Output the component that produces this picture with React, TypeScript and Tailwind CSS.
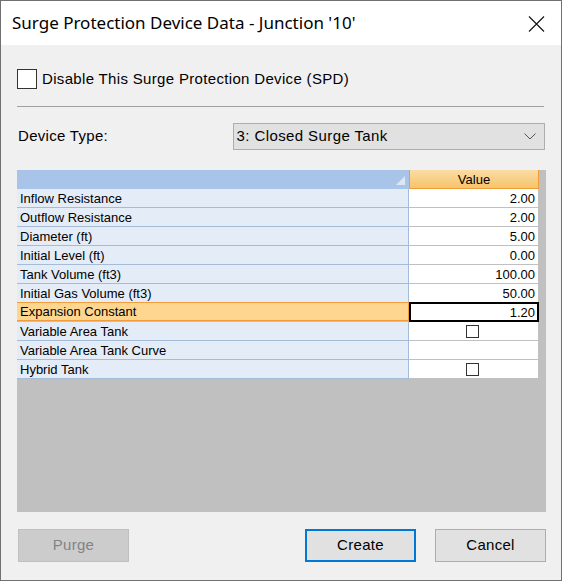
type Row = {
  label: string
  value?: string
  check?: boolean
  selected?: boolean
}

const rows: Row[] = [
  { label: 'Inflow Resistance', value: '2.00' },
  { label: 'Outflow Resistance', value: '2.00' },
  { label: 'Diameter (ft)', value: '5.00' },
  { label: 'Initial Level (ft)', value: '0.00' },
  { label: 'Tank Volume (ft3)', value: '100.00' },
  { label: 'Initial Gas Volume (ft3)', value: '50.00' },
  { label: 'Expansion Constant', value: '1.20', selected: true },
  { label: 'Variable Area Tank', check: true },
  { label: 'Variable Area Tank Curve' },
  { label: 'Hybrid Tank', check: true },
]

const sans = { fontFamily: '"Liberation Sans", Arial, sans-serif' }

function GridRow({ row }: { row: Row }) {
  return (
    <div className="flex h-[19px]">
      <div
        className={
          row.selected
            ? 'w-[392px] h-[19px] bg-[#ffd68f] border-t border-b border-r border-[#f39c3c] -mt-px pl-[3px] flex items-center text-[13px] leading-none'
            : 'w-[392px] h-[19px] bg-[#e4ecf7] border-b border-r border-[#a5bcd9] pl-[3px] flex items-center text-[13px] leading-none'
        }
      >
        {row.label}
      </div>
      {row.selected ? (
        <div className="w-[130px] h-[20px] -mt-px bg-white border-2 border-black flex items-center justify-end pr-[2px] text-[13px] leading-none">
          {row.value}
        </div>
      ) : (
        <div className="w-[130px] h-[19px] bg-white border-b border-r border-[#c0c0c0] flex items-center justify-end pr-[3px] text-[13px] leading-none">
          {row.check ? (
            <span className="w-[13px] h-[13px] border border-[#333] bg-white mx-auto mt-px" />
          ) : (
            row.value
          )}
        </div>
      )}
    </div>
  )
}

export default function App() {
  return (
    <div
      className="w-[562px] h-[581px] border border-[#707070] bg-[#f0f0f0] flex flex-col text-black"
      style={sans}
    >
      {/* title bar */}
      <div className="h-[44px] bg-white flex items-center justify-between pl-[11px] pr-[16px]">
        <span className="text-[17px]" style={{ fontFamily: '"Noto Sans", "Liberation Sans", sans-serif' }}>
          Surge Protection Device Data - Junction '10'
        </span>
        <svg width="17" height="16" viewBox="0 0 17 16" className="mt-[1px]">
          <path d="M1 0.5 L16 15.5 M16 0.5 L1 15.5" stroke="#111" strokeWidth="1.1" />
        </svg>
      </div>

      {/* body */}
      <div className="flex-1 flex flex-col px-[16px]">
        <label className="mt-[24px] flex items-center gap-[5px] h-[20px]">
          <span className="w-[20px] h-[20px] border border-[#333] bg-white" />
          <span className="text-[15px] tracking-[0.33px]">Disable This Surge Protection Device (SPD)</span>
        </label>

        <div className="mt-[17px] h-px bg-[#a0a0a0] w-[527px]" />

        <div className="mt-[16px] flex items-center h-[27px]">
          <span className="w-[216px] pl-[1px] text-[15px] tracking-[0.3px]">Device Type:</span>
          <div className="w-[313px] h-[27px] bg-[#e1e1e1] border border-[#adadad] flex items-center justify-between pl-[3px] pr-[8px]">
            <span className="text-[15px] tracking-[0.4px]">3: Closed Surge Tank</span>
            <svg width="12" height="7" viewBox="0 0 12 7">
              <path d="M0.5 0.5 L6 6 L11.5 0.5" fill="none" stroke="#555" strokeWidth="1" />
            </svg>
          </div>
        </div>

        {/* grid */}
        <div className="mt-[20px] h-[342px] w-[529px] bg-[#c0c0c0]">
          <div className="flex h-[19px]">
            <div className="w-[392px] h-[19px] bg-[#a9c4e9] border-b border-[#a9c4e9] flex items-end justify-end pr-[4px] pb-[3px]">
              <svg width="9" height="9" viewBox="0 0 9 9">
                <polygon points="9,0 9,9 0,9" fill="#dce7f6" />
              </svg>
            </div>
            <div className="w-[130px] h-[19px] bg-gradient-to-b from-[#fbdca3] to-[#f6c46a] border-b border-l border-r border-[#f29b39] flex items-center justify-center text-[13px] leading-none">
              Value
            </div>
          </div>
          {rows.map((row) => (
            <GridRow key={row.label} row={row} />
          ))}
        </div>

        {/* buttons */}
        <div className="mt-[17px] flex items-center">
          <button className="w-[111px] h-[33px] bg-[#cccccc] border border-[#bfbfbf] text-[15px] tracking-[0.3px] text-[#838383] ml-[1px]">
            Purge
          </button>
          <div className="flex-1" />
          <button className="w-[111px] h-[33px] bg-[#e1e1e1] border-2 border-[#0078d7] text-[15px] tracking-[0.3px]">
            Create
          </button>
          <button className="w-[111px] h-[33px] bg-[#e1e1e1] border border-[#adadad] text-[15px] tracking-[0.3px] ml-[19px] mr-[-1px]">
            Cancel
          </button>
        </div>
      </div>
    </div>
  )
}
